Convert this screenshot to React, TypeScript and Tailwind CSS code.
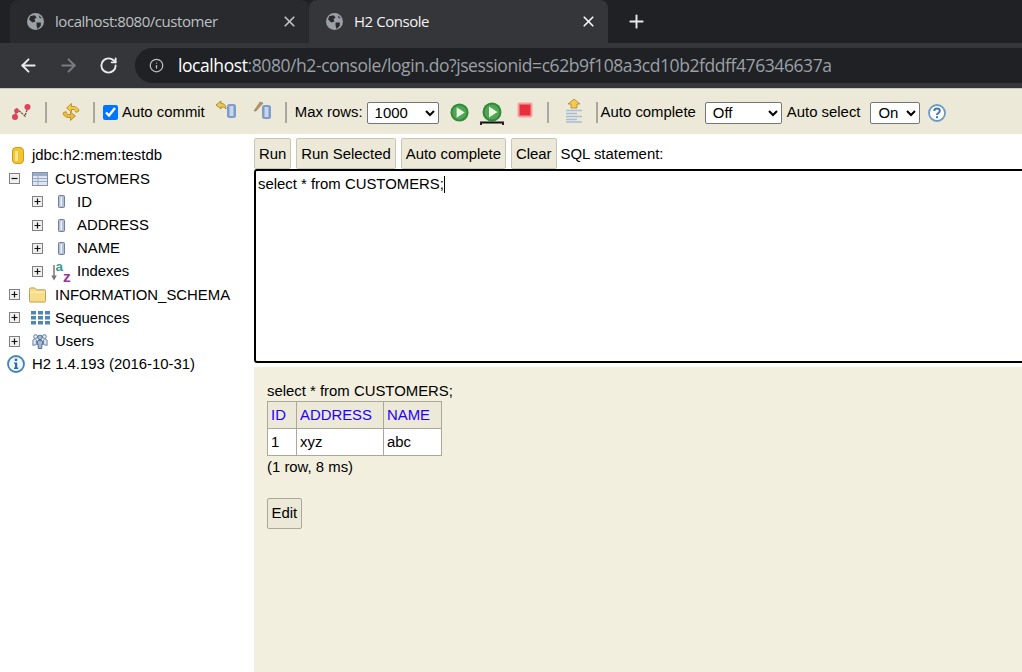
import { ArrowLeft, ArrowRight, Info, Plus, RotateCw, X } from "lucide-react";
import type { ReactNode } from "react";

function Globe() {
  return (
    <svg width="17" height="17" viewBox="0 0 16 16" className="shrink-0">
      <circle cx="8" cy="8" r="8" fill="#9aa0a6" />
      <path d="M3 3 L7 2 L9 4 L7 6 L8 8 L5 9 L2 6 Z M9 9 L13 9 L13 12 L10 15 L9 12 Z M11 2 L14 5 L12 5 Z" fill="#292a2d" />
    </svg>
  );
}

function BrowserTab({ title, active }: { title: string; active?: boolean }) {
  return (
    <div
      className={`flex h-[43px] w-[299px] items-center rounded-t-lg pl-[17px] pr-[11px] ${
        active ? "bg-[#35363a] text-[#f1f3f4]" : "bg-[#292a2d] text-[#bdc1c6]"
      }`}
    >
      <Globe />
      <span className="ml-[11px] flex-1 text-[15px] tracking-[-0.45px]">{title}</span>
      <X size={17} strokeWidth={2.4} />
    </div>
  );
}

function Sep({ className }: { className: string }) {
  return <div className={`h-[21px] w-[2px] shrink-0 bg-[#a9a8a0] ${className}`} />;
}

function Nodes() {
  return (
    <svg width="20" height="20" viewBox="0 0 20 20">
      <path d="M4 16 L6 7 L14 14 L17 5" fill="none" stroke="#6b4a44" strokeWidth="1.3" strokeDasharray="2 1" />
      <circle cx="4" cy="15" r="3" fill="#e0405a" />
      <circle cx="5.5" cy="9" r="2.4" fill="#e0405a" />
      <circle cx="16.5" cy="5" r="3" fill="#e0405a" />
    </svg>
  );
}

function Refresh() {
  return (
    <svg width="20" height="22" viewBox="0 0 20 22">
      <path d="M18 10 C17.5 6.5 14 5 10.5 5.5 L10.5 2.5 L5.5 7 L10.5 11 L10.5 8.5 C12.5 8 14.5 9 15 11.5 Z" fill="#f3c843" stroke="#a97b16" strokeWidth="0.7" />
      <path d="M2 12 C2.5 15.5 6 17 9.5 16.5 L9.5 19.5 L14.5 15 L9.5 11 L9.5 13.5 C7.5 14 5.5 13 5 10.5 Z" fill="#e8b93a" stroke="#a97b16" strokeWidth="0.7" />
    </svg>
  );
}

function Cylinder({ x = 0, w = 9, h = 14, y = 0 }: { x?: number; w?: number; h?: number; y?: number }) {
  return (
    <g>
      <rect x={x} y={y} width={w} height={h} rx="2.5" fill="#7f9bc9" />
      <rect x={x + 2.5} y={y + 2} width={w - 5} height={h - 4} fill="#c8d5ec" />
    </g>
  );
}

function Rollback() {
  return (
    <svg width="22" height="20" viewBox="0 0 22 20">
      <path d="M1 5 L6 1 L6 3.5 C9 3.5 11 5 11 9 C10 7 8 7 6 7 L6 9 Z" fill="#f0c94a" stroke="#8d6d1c" strokeWidth="0.7" />
      <Cylinder x={12} y={4} w={9} h={14} />
    </svg>
  );
}

function Pencil() {
  return (
    <svg width="20" height="20" viewBox="0 0 20 20">
      <path d="M1 11 L7 2 L10 3 L3 11 Z" fill="#b9976a" stroke="#7d6a50" strokeWidth="0.5" />
      <Cylinder x={9} y={5} w={9} h={14} />
    </svg>
  );
}

function PlayIcon() {
  return (
    <>
      <circle cx="10" cy="10" r="9.5" fill="#2f8a3a" />
      <circle cx="10" cy="10" r="7.5" fill="#4fa552" />
      <path d="M7 4.5 L15.5 10 L7 15.5 Z" fill="#e8f5e2" />
    </>
  );
}

function Run() {
  return (
    <svg width="19" height="19" viewBox="0 0 20 20">
      <PlayIcon />
    </svg>
  );
}

function RunSelected() {
  return (
    <svg width="24" height="24" viewBox="0 0 24 24">
      <g transform="translate(2 0)">
        <PlayIcon />
      </g>
      <path d="M1 23 L1 20.5 L23 20.5 L23 23" fill="none" stroke="#111" strokeWidth="1.8" />
    </svg>
  );
}

function Stop() {
  return (
    <svg width="16" height="16" viewBox="0 0 16 16">
      <rect x="0.5" y="0.5" width="15" height="15" rx="2" fill="#f2a0a0" />
      <rect x="2.5" y="2.5" width="11" height="11" fill="#e8303c" />
    </svg>
  );
}

function History() {
  return (
    <svg width="18" height="24" viewBox="0 0 18 24">
      <path d="M9 0 L15 5 L12 5 L12 9 L6 9 L6 5 L3 5 Z" fill="#f5c94d" stroke="#a97b16" strokeWidth="0.7" />
      <path d="M1 11.5 H17 M1 14.5 H12 M1 17.5 H17 M1 20.5 H12 M1 23 H17" stroke="#a7bbdb" strokeWidth="1.3" />
    </svg>
  );
}

function Help() {
  return (
    <svg width="18" height="18" viewBox="0 0 18 18">
      <circle cx="9" cy="9" r="8" fill="#fff" stroke="#6c9ac5" strokeWidth="1.8" />
      <path d="M6.3 7 C6.3 3.8 11.8 3.8 11.8 7 C11.8 9 9 9 9 11" fill="none" stroke="#3f78ad" strokeWidth="2" />
      <rect x="8" y="12.2" width="2" height="2" fill="#3f78ad" />
    </svg>
  );
}

function ToolbarSelect({ value, options, className }: { value: string; options: string[]; className: string }) {
  return (
    <select
      defaultValue={value}
      className={`h-[22px] shrink-0 rounded-[2px] border border-[#767676] bg-white pl-[3px] text-[14.9px] text-black ${className}`}
    >
      {options.map((o) => (
        <option key={o}>{o}</option>
      ))}
    </select>
  );
}

function Toolbar() {
  return (
    <div className="flex h-[45px] items-center bg-[#ece9d8] pt-[2px] text-[14.9px] whitespace-nowrap text-black">
      <div className="ml-[11px] -mt-[2px]"><Nodes /></div>
      <Sep className="ml-[14px]" />
      <div className="ml-[14px] -mt-[2px]"><Refresh /></div>
      <Sep className="ml-[12px]" />
      <input type="checkbox" defaultChecked className="ml-[8px] size-[15px] shrink-0 accent-[#0075ff]" />
      <span className="ml-[4px]">Auto commit</span>
      <div className="ml-[10px] -mt-[5px]"><Rollback /></div>
      <div className="ml-[16px] -mt-[5px]"><Pencil /></div>
      <Sep className="ml-[12px]" />
      <span className="ml-[8px]">Max rows:</span>
      <ToolbarSelect value="1000" options={["1000"]} className="ml-[4px] w-[72px]" />
      <div className="ml-[11px]"><Run /></div>
      <div className="ml-[11px] mt-[2px]"><RunSelected /></div>
      <div className="ml-[13px] -mt-[5px]"><Stop /></div>
      <Sep className="ml-[14px]" />
      <div className="ml-[16px] -mt-[3px]"><History /></div>
      <Sep className="ml-[13px]" />
      <span className="ml-[3px]">Auto complete</span>
      <ToolbarSelect value="Off" options={["Off"]} className="ml-[9px] w-[77px]" />
      <span className="ml-[5px]">Auto select</span>
      <ToolbarSelect value="On" options={["On"]} className="ml-[10px] w-[50px]" />
      <div className="ml-[8px]"><Help /></div>
    </div>
  );
}

function Expander({ open }: { open?: boolean }) {
  return (
    <svg width="11" height="11" viewBox="0 0 11 11" className="shrink-0">
      <rect x="0.5" y="0.5" width="10" height="10" fill="#f0f0f0" stroke="#808080" />
      <path d={open ? "M2.5 5.5 H8.5" : "M2.5 5.5 H8.5 M5.5 2.5 V8.5"} stroke="#111" strokeWidth="1.2" />
    </svg>
  );
}

function Database() {
  return (
    <svg width="12" height="17" viewBox="0 0 12 17">
      <rect x="0.5" y="0.5" width="11" height="16" rx="3.5" fill="#f3c431" stroke="#d29b12" />
      <rect x="3" y="4" width="3" height="10" fill="#fbe58f" />
    </svg>
  );
}

function TableIcon() {
  return (
    <svg width="16" height="14" viewBox="0 0 16 14">
      <rect x="0.5" y="0.5" width="15" height="13" fill="#dfe5ef" stroke="#8493ad" />
      <rect x="1" y="1" width="14" height="3" fill="#99abc9" />
      <path d="M1 6.5 H15 M1 9.5 H15 M6 3.5 V13" stroke="#99abc9" />
    </svg>
  );
}

function ColumnIcon() {
  return (
    <svg width="7" height="13" viewBox="0 0 7 13">
      <rect x="0.5" y="0.5" width="6" height="12" rx="1" fill="#b4c0d6" stroke="#6f7f9f" />
      <rect x="2.5" y="2" width="1.5" height="9" fill="#eef1f6" />
    </svg>
  );
}

function IndexIcon() {
  return (
    <svg
      width="21"
      height="20"
      viewBox="0 0 21 20"
      className="overflow-visible"
      fontFamily="'Liberation Sans', sans-serif"
      fontWeight="700"
    >
      <path d="M3 3 V16" stroke="#777" strokeWidth="1.5" />
      <path d="M0.2 13.5 L3 18.5 L5.8 13.5 Z" fill="#777" />
      <text x="4.5" y="9" fontSize="13.5" fill="#3a9a8e">a</text>
      <text x="12" y="19.5" fontSize="15.5" fill="#96379b">z</text>
    </svg>
  );
}

function Folder() {
  return (
    <svg width="17" height="16" viewBox="0 0 18 16" className="-translate-x-[3px]">
      <path d="M0.5 14 V2 C0.5 1 1 0.5 2 0.5 H6 L8 2.5 H16 C17 2.5 17.5 3 17.5 4 V14 C17.5 15 17 15.5 16 15.5 H2 C1 15.5 0.5 15 0.5 14 Z" fill="#f8dd8a" stroke="#b89a4e" />
      <path d="M1 5 H17" stroke="#fdf3c8" />
    </svg>
  );
}

function Sequences() {
  const xs = [0, 7, 14];
  const ys = [1, 6, 11];
  return (
    <svg width="19" height="15" viewBox="0 0 19 15">
      {ys.map((y) =>
        xs.map((x) => <rect key={`${x}-${y}`} x={x} y={y} width="5" height="3.5" fill="#4f86b8" />)
      )}
    </svg>
  );
}

function Users() {
  return (
    <svg width="16" height="18" viewBox="0 0 18 18">
      <circle cx="4" cy="4" r="2.2" fill="#dbe3ee" stroke="#5f7a9c" />
      <circle cx="14" cy="4" r="2.2" fill="#dbe3ee" stroke="#5f7a9c" />
      <path d="M1 14 V8 L3.5 6.5 L5 8 V13 Z M17 14 V8 L14.5 6.5 L13 8 V13 Z" fill="#dbe3ee" stroke="#5f7a9c" />
      <circle cx="9" cy="5" r="2.6" fill="#a3b9d3" stroke="#3f5f86" />
      <path d="M6 9 L9 8 L12 9 V13 H11 V17.5 H7 V13 H6 Z" fill="#a3b9d3" stroke="#3f5f86" />
    </svg>
  );
}

function InfoIcon() {
  return (
    <svg width="18" height="18" viewBox="0 0 18 18" className="shrink-0">
      <circle cx="9" cy="9" r="8" fill="#eef5fb" stroke="#4383b8" strokeWidth="1.8" />
      <rect x="7.8" y="3.6" width="2.4" height="2.4" fill="#2a6ca5" />
      <path d="M7 7.5 H10.2 V12.6 H11.2 V14 H7 V12.6 H8 V8.8 H7 Z" fill="#2a6ca5" />
    </svg>
  );
}

const iconBox = {
  none: "ml-[2px] mr-[7px] w-[14px]",
  root: "ml-[10px] mr-[5px] w-[20px]",
  child: "ml-[8px] mr-[5px] w-[21px]",
};

function TreeRow({
  indent,
  expander,
  icon,
  label,
}: {
  indent: "none" | "root" | "child";
  expander?: "open" | "closed";
  icon: ReactNode;
  label: string;
}) {
  return (
    <div className={`flex h-[23.2px] items-center ${indent === "child" ? "pl-[32px]" : "pl-[9px]"}`}>
      {expander && <Expander open={expander === "open"} />}
      <div className={`flex shrink-0 items-center justify-center ${iconBox[indent]}`}>{icon}</div>
      <span className="whitespace-nowrap">{label}</span>
    </div>
  );
}

function Sidebar() {
  return (
    <aside className="w-[254px] shrink-0 bg-white pt-[10px] text-[14.9px] text-black">
      <TreeRow indent="none" icon={<Database />} label="jdbc:h2:mem:testdb" />
      <TreeRow indent="root" expander="open" icon={<TableIcon />} label="CUSTOMERS" />
      <TreeRow indent="child" expander="closed" icon={<ColumnIcon />} label="ID" />
      <TreeRow indent="child" expander="closed" icon={<ColumnIcon />} label="ADDRESS" />
      <TreeRow indent="child" expander="closed" icon={<ColumnIcon />} label="NAME" />
      <TreeRow indent="child" expander="closed" icon={<IndexIcon />} label="Indexes" />
      <TreeRow indent="root" expander="closed" icon={<Folder />} label="INFORMATION_SCHEMA" />
      <TreeRow indent="root" expander="closed" icon={<Sequences />} label="Sequences" />
      <TreeRow indent="root" expander="closed" icon={<Users />} label="Users" />
      <div className="flex h-[23.2px] items-center pl-[7px]">
        <InfoIcon />
        <span className="ml-[7px]">H2 1.4.193 (2016-10-31)</span>
      </div>
    </aside>
  );
}

function SqlButton({ label }: { label: string }) {
  return (
    <button className="h-[31px] shrink-0 rounded-[2px] border border-[#c9c6b4] bg-[#ece9d8] px-[4px] pt-px text-[14.9px] text-black">
      {label}
    </button>
  );
}

function SqlPanel() {
  return (
    <main className="flex min-w-0 flex-1 flex-col overflow-hidden">
      <div className="flex h-[35px] items-end gap-[5px] pt-[4px]">
        <SqlButton label="Run" />
        <SqlButton label="Run Selected" />
        <SqlButton label="Auto complete" />
        <SqlButton label="Clear" />
        <span className="-ml-[1px] self-center pt-[2px] text-[14.9px] whitespace-nowrap text-black">SQL statement:</span>
      </div>
      <div className="-mr-[4px] h-[194px] rounded-[3px] border-2 border-black bg-white pl-[2px] pt-[5px] text-[14.9px] leading-[17px] text-black">
        select * from CUSTOMERS;<span className="inline-block h-[17px] w-px bg-black align-top" />
      </div>
      <div className="mt-[4px] flex-1 bg-[#f2efdf] pl-[13px] pt-[15px] text-[14.9px] text-black">
        <div className="leading-[19px]">select * from CUSTOMERS;</div>
        <table className="border-collapse border border-[#aba89a]">
          <thead>
            <tr className="h-[27px] bg-[#ece9d8] text-[#2200ff]">
              <th className="w-[29px] border border-[#aba89a] px-[3px] text-left font-normal">ID</th>
              <th className="w-[87px] border border-[#aba89a] px-[3px] text-left font-normal">ADDRESS</th>
              <th className="w-[58px] border border-[#aba89a] px-[3px] text-left font-normal">NAME</th>
            </tr>
          </thead>
          <tbody>
            <tr className="h-[27px] bg-white">
              <td className="border border-[#aba89a] px-[3px]">1</td>
              <td className="border border-[#aba89a] px-[3px]">xyz</td>
              <td className="border border-[#aba89a] px-[3px]">abc</td>
            </tr>
          </tbody>
        </table>
        <div className="mt-[3px] leading-[17px]">(1 row, 8 ms)</div>
        <button className="mt-[22px] h-[31px] rounded-[2px] border border-[#aba89a] bg-[#ece9d8] px-[3.5px]">Edit</button>
      </div>
    </main>
  );
}

export default function App() {
  return (
    <div className="flex h-[672px] w-[1022px] flex-col overflow-hidden bg-white font-['Liberation_Sans',Arial,sans-serif]">
      <div className="flex h-[43px] items-end bg-[#202124] pl-[10px] font-['Open_Sans',sans-serif]">
        <BrowserTab title="localhost:8080/customer" />
        <BrowserTab title="H2 Console" active />
        <Plus size={21} strokeWidth={2.2} className="mb-[11px] ml-[18px] text-[#e8eaed]" />
      </div>
      <div className="flex h-[45px] items-center bg-[#35363a] pl-[18px] font-['Open_Sans',sans-serif]">
        <ArrowLeft size={21} strokeWidth={2.2} className="text-[#e8eaed]" />
        <ArrowRight size={21} strokeWidth={2.2} className="ml-[19px] text-[#7a7d82]" />
        <RotateCw size={19} strokeWidth={2.4} className="ml-[20px] text-[#e8eaed]" />
        <div className="ml-[17px] flex h-[35px] flex-1 items-center rounded-l-[18px] bg-[#202124] pl-[14px]">
          <Info size={15} className="text-[#bdc1c6]" />
          <span className="ml-[14px] text-[17.5px] tracking-[-0.42px] whitespace-nowrap text-[#9aa0a6]">
            <span className="text-white">localhost</span>:8080/h2-console/login.do?jsessionid=c62b9f108a3cd10b2fddff476346637a
          </span>
        </div>
      </div>
      <div className="h-px bg-[#c9c9c4]" />
      <Toolbar />
      <div className="flex min-h-0 flex-1">
        <Sidebar />
        <SqlPanel />
      </div>
    </div>
  );
}
